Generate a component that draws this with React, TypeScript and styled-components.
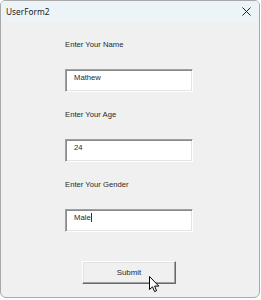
import React from 'react';
import styled, { createGlobalStyle } from 'styled-components';

const GlobalStyle = createGlobalStyle`
    html, body {
        margin: 0;
        padding: 0;
        background: #ffffff;
    }
`

const fields = [
    { label: 'Enter Your Name', value: 'Mathew', caret: false },
    { label: 'Enter Your Age', value: '24', caret: false },
    { label: 'Enter Your Gender', value: 'Male', caret: true },
]

const App: React.FC<{}> = () => {
    return (
        <>
            <GlobalStyle />
            <Window>
                <TitleBar>
                    <Title>UserForm2</Title>
                    <CloseButton>
                        <svg width="9" height="9" viewBox="0 0 9 9">
                            <path d="M0.5 0.5 L8.5 8.5 M8.5 0.5 L0.5 8.5" stroke="#1f1f1f" strokeWidth="1" fill="none" />
                        </svg>
                    </CloseButton>
                </TitleBar>
                <Body>
                    <Form>
                        {fields.map(field => {
                            return <Field key={field.label}>
                                <Label>{field.label}</Label>
                                <TextBox>
                                    {field.value}
                                    {field.caret && <Caret />}
                                </TextBox>
                            </Field>
                        })}
                    </Form>
                    <ButtonRow>
                        <SubmitButton>
                            Submit
                            <Cursor width="11" height="17" viewBox="0 0 11 17">
                                <path d="M0.5 0.5 L0.5 13.5 L3.5 10.8 L5.6 15.6 L7.6 14.7 L5.6 10.1 L9.8 10.1 Z"
                                    fill="#ffffff" stroke="#000000" strokeWidth="1" strokeLinejoin="round" />
                            </Cursor>
                        </SubmitButton>
                    </ButtonRow>
                </Body>
            </Window>
        </>
    )
}

const Window = styled.div`
    width: 260px;
    height: 298px;
    box-sizing: border-box;
    border: 1px solid #a9a9a9;
    border-radius: 5px 5px 6px 6px;
    background: #f0f0f0;
    overflow: hidden;
    display: flex;
    flex-direction: column;
    font-family: "Liberation Sans", Arial, sans-serif;
`

const TitleBar = styled.div`
    height: 21px;
    background: #edf4f8;
    display: flex;
    align-items: center;
    justify-content: space-between;
    padding: 0 7px 0 5px;
`

const Title = styled.span`
    font-family: "Noto Sans", sans-serif;
    font-size: 8.3px;
    color: #1a1a1a;
`

const CloseButton = styled.div`
    display: flex;
    align-items: center;
    padding-right: 1px;
`

const Body = styled.div`
    flex: 1;
    display: flex;
    flex-direction: column;
    padding-top: 18px;
`

const Form = styled.div`
    width: 128px;
    margin-left: 64px;
    display: flex;
    flex-direction: column;
    gap: 18px;
`

const Field = styled.div`
    display: flex;
    flex-direction: column;
    gap: 19px;
`

const Label = styled.div`
    font-size: 7.7px;
    line-height: 10px;
    height: 10px;
    color: #2a2a2a;
`

const TextBox = styled.div`
    height: 23px;
    box-sizing: border-box;
    background: #ffffff;
    border-style: solid;
    border-width: 1px;
    border-color: #a0a0a0 #ffffff #ffffff #a0a0a0;
    box-shadow: inset 1px 1px 0 #8a8a8a, inset -1px -1px 0 #e3e3e3;
    padding: 3px 0 0 8px;
    font-size: 7.7px;
    line-height: 9px;
    color: #2a2a2a;
    display: flex;
    align-items: flex-start;
`

const Caret = styled.span`
    display: inline-block;
    width: 1px;
    height: 9px;
    margin-left: 0.5px;
    background: #333333;
`

const ButtonRow = styled.div`
    display: flex;
    justify-content: center;
    padding-top: 29px;
    padding-right: 2px;
`

const SubmitButton = styled.div`
    position: relative;
    width: 94px;
    height: 23px;
    box-sizing: border-box;
    border-style: solid;
    border-width: 1px;
    border-color: #ffffff #696969 #696969 #ffffff;
    box-shadow: inset -1px -1px 0 #a0a0a0, inset 1px 1px 0 #e3e3e3;
    background: #f0f0f0;
    display: flex;
    align-items: center;
    justify-content: center;
    font-size: 7.9px;
    color: #2a2a2a;
`

const Cursor = styled.svg`
    position: absolute;
    left: 66px;
    top: 14px;
`

export default App
